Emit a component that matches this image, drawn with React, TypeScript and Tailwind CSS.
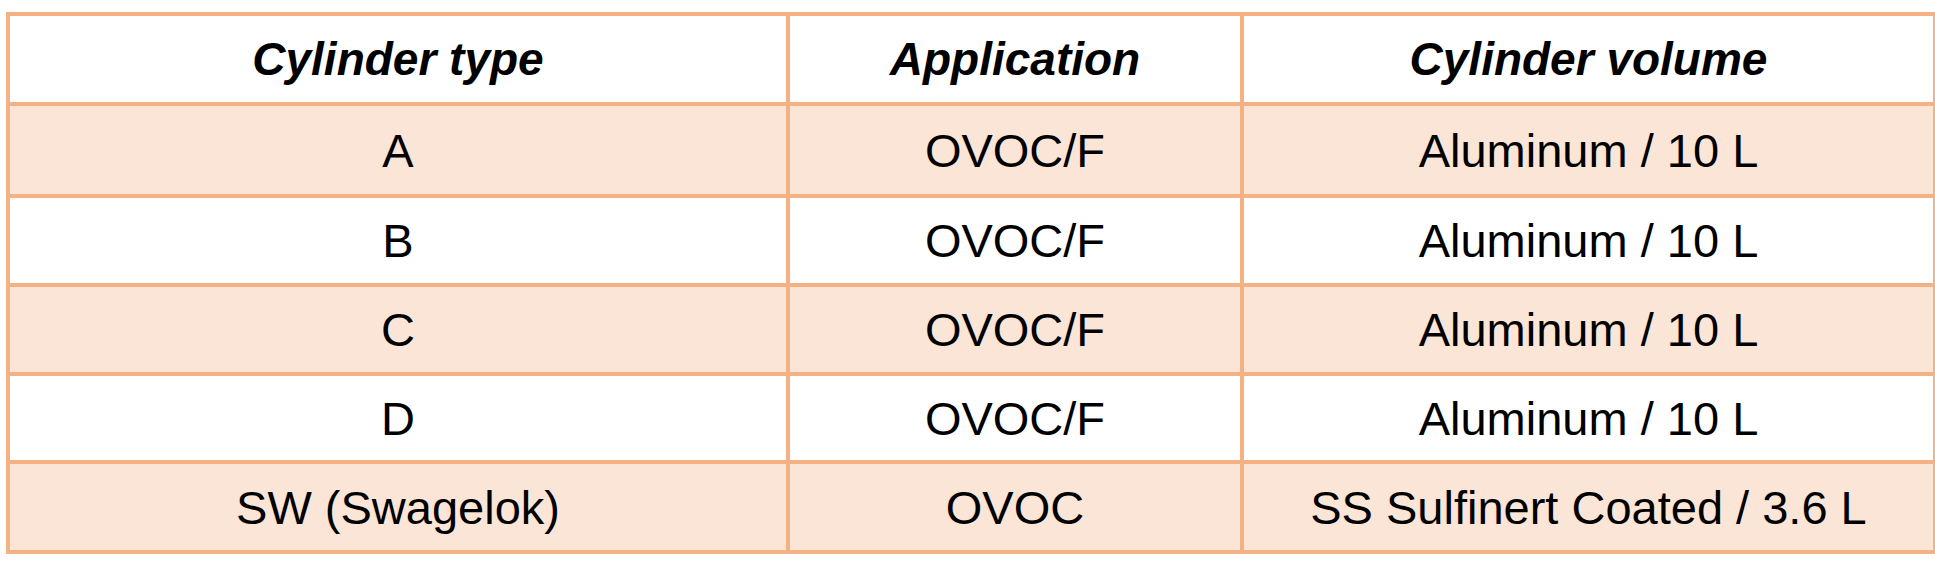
const rows = [
  { type: 'A', app: 'OVOC/F', volume: 'Aluminum / 10 L', shaded: true, h: 'h-[92px]' },
  { type: 'B', app: 'OVOC/F', volume: 'Aluminum / 10 L', shaded: false, h: 'h-[89px]' },
  { type: 'C', app: 'OVOC/F', volume: 'Aluminum / 10 L', shaded: true, h: 'h-[89px]' },
  { type: 'D', app: 'OVOC/F', volume: 'Aluminum / 10 L', shaded: false, h: 'h-[88px]' },
  { type: 'SW (Swagelok)', app: 'OVOC', volume: 'SS Sulfinert Coated / 3.6 L', shaded: true, h: 'h-[90px]' },
];

export default function App() {
  return (
    <div className="w-[1935px] h-[563px] bg-white pt-[12px] pl-[6px] font-['Liberation_Sans',Arial,sans-serif] text-black">
      <table className="w-[1927px] border-collapse table-fixed text-[47px] leading-none">
        <colgroup>
          <col className="w-[780px]" />
          <col className="w-[454px]" />
          <col className="w-[693px]" />
        </colgroup>
        <thead>
          <tr className="h-[90px] bg-white text-[46px]">
            <th className="border-[4px] border-[#F4B183] font-bold italic text-center">Cylinder type</th>
            <th className="border-[4px] border-[#F4B183] font-bold italic text-center">Application</th>
            <th className="border-[4px] border-[#F4B183] font-bold italic text-center">Cylinder volume</th>
          </tr>
        </thead>
        <tbody>
          {rows.map((r) => (
            <tr key={r.type} className={`${r.h} ${r.shaded ? 'bg-[#FBE5D6]' : 'bg-white'}`}>
              <td className="border-[4px] border-[#F4B183] text-center">{r.type}</td>
              <td className="border-[4px] border-[#F4B183] text-center">{r.app}</td>
              <td className="border-[4px] border-[#F4B183] text-center">{r.volume}</td>
            </tr>
          ))}
        </tbody>
      </table>
    </div>
  );
}
